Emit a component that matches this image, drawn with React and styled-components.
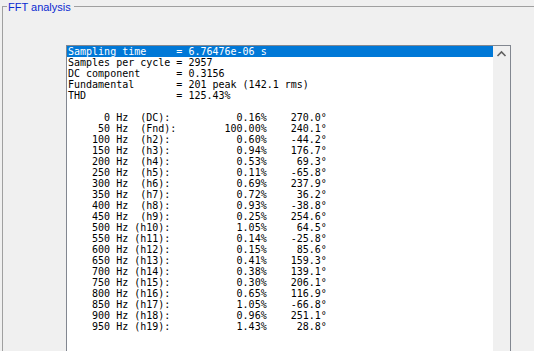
import styled, { createGlobalStyle } from "styled-components";

const GlobalStyle = createGlobalStyle`
    html, body {
        margin: 0;
        padding: 0;
        overflow: hidden;
        background: #f0f0f0;
    }
`;

// group box: right and bottom edges lie outside the captured window
const Group = styled.fieldset`
    margin: -1px 0 0 2px;
    padding: 0;
    width: calc(100vw - 2px);
    min-width: 0;
    height: 352px;
    border: 1px solid #a0a0a0;
    border-right: none;
    border-bottom: none;
    box-sizing: border-box;
`;

const Caption = styled.legend`
    margin-left: 4px;
    padding: 2px 3px 0 1px;
    font-family: "Liberation Sans", Arial, sans-serif;
    font-size: 11px;
    line-height: 12px;
    color: #0a2ad0;
`;

const ListBox = styled.div`
    display: flex;
    width: 445px;
    height: 306px;
    margin: 32px 0 0 63px;
    border: 1px solid #828790;
    border-bottom: none;
    box-sizing: border-box;
    background: #ffffff;
    overflow: hidden;
`;

const Items = styled.div`
    flex: 1;
`;

const Item = styled.div`
    height: 11px;
    padding-left: 1px;
    white-space: pre;
    font-family: "DejaVu Sans Mono", "Liberation Mono", monospace;
    font-size: 10px;
    line-height: 11px;
    color: ${(p) => (p.selected ? "#ffffff" : "#000000")};
    background: ${(p) => (p.selected ? "#0078d7" : "transparent")};
`;

const ScrollBar = styled.div`
    width: 17px;
    background: #f0f0f0;
`;

const ArrowButton = styled.div`
    height: 17px;
    display: flex;
`;

const header = [
    "Sampling time     = 6.76476e-06 s",
    "Samples per cycle = 2957",
    "DC component      = 0.3156",
    "Fundamental       = 201 peak (142.1 rms)",
    "THD               = 125.43%",
    "",
];

const harmonics = [
    ["0", "(DC)", "0.16", "270.0"],
    ["50", "(Fnd)", "100.00", "240.1"],
    ["100", "(h2)", "0.60", "-44.2"],
    ["150", "(h3)", "0.94", "176.7"],
    ["200", "(h4)", "0.53", "69.3"],
    ["250", "(h5)", "0.11", "-65.8"],
    ["300", "(h6)", "0.69", "237.9"],
    ["350", "(h7)", "0.72", "36.2"],
    ["400", "(h8)", "0.93", "-38.8"],
    ["450", "(h9)", "0.25", "254.6"],
    ["500", "(h10)", "1.05", "64.5"],
    ["550", "(h11)", "0.14", "-25.8"],
    ["600", "(h12)", "0.15", "85.6"],
    ["650", "(h13)", "0.41", "159.3"],
    ["700", "(h14)", "0.38", "139.1"],
    ["750", "(h15)", "0.30", "206.1"],
    ["800", "(h16)", "0.65", "116.9"],
    ["850", "(h17)", "1.05", "-66.8"],
    ["900", "(h18)", "0.96", "251.1"],
    ["950", "(h19)", "1.43", "28.8"],
];

const formatRow = ([hz, tag, pct, ph]) => {
    const left = `${hz.padStart(7)} Hz ` + (tag === "(Fnd)" ? " (Fnd):" : `${tag.padStart(5)}:`);
    return left + `${pct}%`.padStart(33 - left.length) + `${ph}°`.padStart(10);
};

const lines = [...header, ...harmonics.map(formatRow)];

const App = () => {
    return (
        <>
            <GlobalStyle />
            <Group>
                <Caption>FFT analysis</Caption>
                <ListBox>
                    <Items>
                        {lines.map((line, i) => (
                            <Item key={i} selected={i === 0}>{line}</Item>
                        ))}
                    </Items>
                    <ScrollBar>
                        <ArrowButton>
                            <svg width="17" height="17" viewBox="0 0 17 17">
                                <path d="M4.5 10 L8.5 6 L12.5 10" fill="none" stroke="#606060" strokeWidth="1.6" />
                            </svg>
                        </ArrowButton>
                    </ScrollBar>
                </ListBox>
            </Group>
        </>
    );
};

export default App;
